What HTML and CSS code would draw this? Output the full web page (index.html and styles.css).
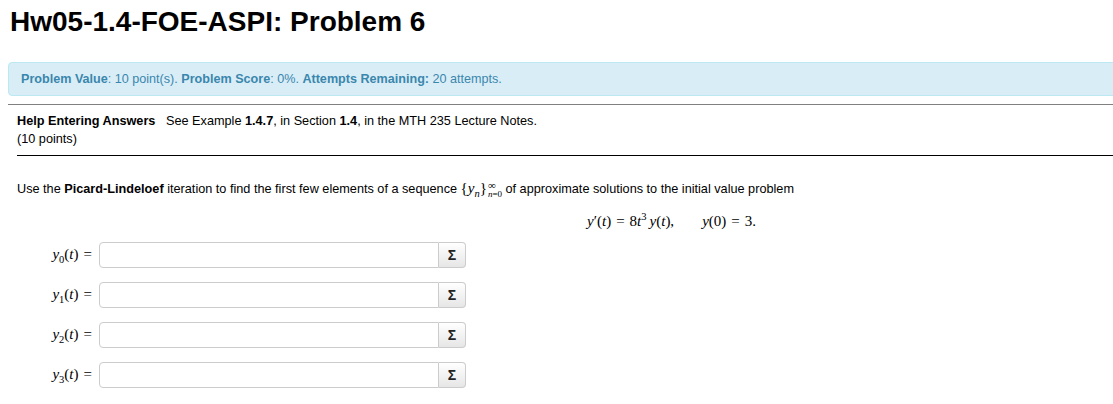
FILE: index.html
```html
<!DOCTYPE html>
<html>
<head>
<meta charset="utf-8">
<link rel="stylesheet" href="styles.css">
</head>
<body>
<h1 class="title">Hw05-1.4-FOE-ASPI: Problem 6</h1>
<div class="info"><b>Problem Value</b>: 10 point(s). <b>Problem Score</b>: 0%. <b>Attempts Remaining:</b> 20 attempts.</div>
<hr class="rule-gray">
<div class="problem">
  <div class="help"><b>Help Entering Answers</b>&nbsp;&nbsp; See Example <b>1.4.7</b>, in Section <b>1.4</b>, in the MTH 235 Lecture Notes.<br>(10 points)</div>
  <hr class="rule-black">
  <p class="statement">Use the <b>Picard-Lindeloef</b> iteration to find the first few elements of a sequence <span class="m">{<i>y</i><sub><i>n</i></sub>}<span class="supsub"><span class="sup">∞</span><span class="sub"><i>n</i>=0</span></span></span> of approximate solutions to the initial value problem</p>
  <div class="equation"><span class="m"><i>y</i>′(<i>t</i>)<span class="eq">=</span>8<i>t</i><sup>3</sup>&thinsp;<i>y</i>(<i>t</i>),</span><span class="m eq2"><i>y</i>(0)<span class="eq">=</span>3.</span></div>
  <div class="answers">
    <div class="row"><span class="label m"><i>y</i><sub>0</sub>(<i>t</i>)<span class="eq">=</span></span><span class="field"><span class="input"></span><span class="btn">Σ</span></span></div>
    <div class="row"><span class="label m"><i>y</i><sub>1</sub>(<i>t</i>)<span class="eq">=</span></span><span class="field"><span class="input"></span><span class="btn">Σ</span></span></div>
    <div class="row"><span class="label m"><i>y</i><sub>2</sub>(<i>t</i>)<span class="eq">=</span></span><span class="field"><span class="input"></span><span class="btn">Σ</span></span></div>
    <div class="row"><span class="label m"><i>y</i><sub>3</sub>(<i>t</i>)<span class="eq">=</span></span><span class="field"><span class="input"></span><span class="btn">Σ</span></span></div>
  </div>
</div>
</body>
</html>
```
FILE: styles.css
```css
html, body { margin: 0; padding: 0; background: #fff; }
body {
  padding: 0 0 0 8px;
  font-family: "Liberation Sans", Arial, sans-serif;
  color: #000;
  overflow: hidden;
  width: 1105px;
}
.title {
  margin: 0;
  padding: 5px 0 0 2px;
  font-size: 28px;
  line-height: 34px;
  font-weight: bold;
}
.info {
  margin-top: 23px;
  margin-right: -20px;
  height: 34px;
  box-sizing: border-box;
  background: #d9edf7;
  border: 1px solid #bce8f1;
  border-radius: 4px;
  color: #3a87ad;
  font-size: 12.6px;
  line-height: 32px;
  padding: 0 12px;
}
.rule-gray {
  margin: 8px 0 0 0;
  border: 0;
  border-top: 1px solid #808080;
  height: 0;
}
.problem { padding-left: 9px; font-size: 12.7px; }
.help { padding-top: 7px; line-height: 18px; }
.rule-black {
  margin: 7px 0 0 0;
  border: 0;
  border-top: 1px solid #000;
  height: 0;
}
.statement { margin: 23px 0 0 0; line-height: 18px; }
.m { font-family: "Liberation Serif", "Times New Roman", serif; font-size: 15px; }
.m sub, .m sup { font-size: 10.5px; line-height: 0; }
.eq { margin: 0 5px; }
.supsub { display: inline-flex; flex-direction: column; vertical-align: middle; line-height: 9px; margin-left: 1px; }
.supsub .sup { font-size: 11px; }
.supsub .sub { font-size: 9px; }
.equation { display: flex; padding-left: 570px; margin-top: 13px; line-height: 18px; }
.eq2 { margin-left: 28px; }
.answers { display: flex; flex-direction: column; gap: 14px; margin-top: 12px; }
.row { display: flex; align-items: center; }
.label { width: 75px; text-align: right; padding-right: 7px; }
.label .eq { margin-right: 0; }
.field { display: flex; height: 26px; }
.input {
  width: 340px;
  box-sizing: border-box;
  border: 1px solid #ccc;
  border-radius: 4px 0 0 4px;
  background: #fff;
}
.btn {
  width: 27px;
  box-sizing: border-box;
  border: 1px solid #ccc;
  border-left: 0;
  border-radius: 0 4px 4px 0;
  background: linear-gradient(#fff, #e6e6e6);
  font-weight: bold;
  font-size: 14px;
  display: flex;
  align-items: center;
  justify-content: center;
  color: #222;
}
```
